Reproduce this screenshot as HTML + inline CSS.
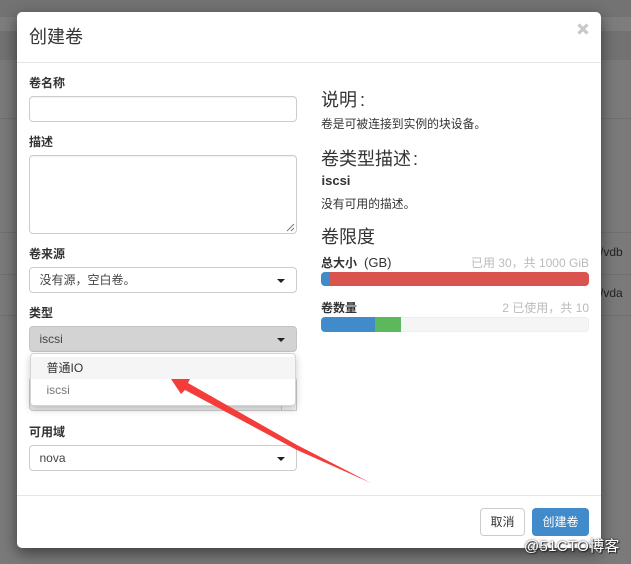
<!DOCTYPE html>
<html lang="zh"><head><meta charset="utf-8"><style>
html,body{margin:0;padding:0}
body{width:631px;height:564px;overflow:hidden;position:relative;background:#7a7a7a;font-family:"Liberation Sans","Noto Sans CJK SC",sans-serif;font-size:12px;color:#333}
.a{position:absolute;white-space:nowrap}
.band{position:absolute;left:0;width:631px}
.l{font-weight:700;line-height:16px;height:16px;left:12px;color:#333}
.f{box-sizing:border-box;border:1px solid #ccc;border-radius:4px;background:#fff;left:12px;width:268px;box-shadow:inset 0 1px 1px rgba(0,0,0,.05)}
.s{height:26px;line-height:24px;padding-left:9.5px;color:#444;box-shadow:none}
.c{position:absolute;right:11px;top:11px;width:0;height:0;border-left:4px solid transparent;border-right:4px solid transparent;border-top:4px solid #222}
.h{left:304px;font-size:18px;line-height:22px;color:#333}
.bar{left:304px;width:268px;border-radius:4px;overflow:hidden;background:#f5f5f5}
.bar div{position:absolute;top:0;bottom:0}
.m{color:#bbb;right:12px;line-height:16px}
</style></head><body>
<div class="band" style="top:0;height:17px;background:#737373"></div>
<div class="band" style="top:17px;height:14px;background:#7d7d7d"></div>
<div class="band" style="top:31px;height:29px;background:#727272"></div>
<div class="band" style="top:118px;height:1px;background:#707070"></div>
<div class="band" style="top:232px;height:1px;background:#707070"></div>
<div class="band" style="top:274px;height:1px;background:#707070"></div>
<div class="band" style="top:315px;height:1px;background:#707070"></div>
<div class="a" style="left:600px;top:244px;color:#222;line-height:16px">/vdb</div>
<div class="a" style="left:600px;top:285px;color:#222;line-height:16px">/vda</div>

<div class="a" style="left:17px;top:12px;width:584px;height:536px;background:#fff;border-radius:5px;box-shadow:0 5px 15px rgba(0,0,0,.5);white-space:normal">
 <div class="a" style="left:12px;top:12px;font-size:18px;line-height:26px;color:#333">创建卷</div>
 <svg class="a" style="left:559px;top:10px" width="14" height="14"><path d="M2.5 2.5L11.5 11.5M11.5 2.5L2.5 11.5" stroke="#c9c9c9" stroke-width="3.2" fill="none"/></svg>
 <div class="a" style="left:0;top:50px;width:584px;height:1px;background:#e5e5e5"></div>

 <div class="a l" style="top:63px">卷名称</div>
 <div class="a f" style="top:84px;height:26px"></div>
 <div class="a l" style="top:122px">描述</div>
 <div class="a f" style="top:143px;height:79px">
  <svg class="a" style="right:1px;bottom:1px" width="9" height="9"><path d="M1 8L8 1M5 8L8 5" stroke="#777" stroke-width="1" fill="none"/></svg>
 </div>
 <div class="a l" style="top:234px">卷来源</div>
 <div class="a f s" style="top:255px">没有源，空白卷。<i class="c"></i></div>
 <div class="a l" style="top:293px">类型</div>
 <div class="a f s" style="top:314px;background:#d3d3d3;border-color:#c4c4c4">iscsi<i class="c"></i></div>

 <div class="a f" style="top:365px;height:34px;background:#eee"></div>
 <div class="a" style="left:264px;top:375px;width:16px;height:24px;box-sizing:border-box;border:1px solid #ccc;background:#f5f5f5"></div>

 <div class="a" style="left:13px;top:341px;width:266px;height:53px;box-sizing:border-box;background:#fff;border:1px solid #d5d5d5;border-radius:4px;box-shadow:0 3px 8px rgba(0,0,0,.22)">
  <div class="a" style="left:0;top:3px;width:264px;height:22px;background:#f5f5f5"></div>
  <div class="a" style="left:15.5px;top:3px;line-height:22px;color:#333">普通IO</div>
  <div class="a" style="left:15.5px;top:25px;line-height:22px;color:#777">iscsi</div>
 </div>

 <div class="a l" style="top:412px">可用域</div>
 <div class="a f s" style="top:433px">nova<i class="c"></i></div>

 <div class="a h" style="top:77px;font-size:18px">说明<span style="margin-left:3px">:</span></div>
 <div class="a" style="left:304px;top:104px;line-height:16px;font-size:11.8px">卷是可被连接到实例的块设备。</div>
 <div class="a h" style="top:136px">卷类型描述<span style="margin-left:2px">:</span></div>
 <div class="a" style="left:304.5px;top:161px;line-height:16px;font-weight:700;font-size:13px">iscsi</div>
 <div class="a" style="left:304px;top:184px;line-height:16px;font-size:11.8px">没有可用的描述。</div>
 <div class="a h" style="top:214px">卷限度</div>

 <div class="a" style="left:304px;top:243px;line-height:16px;font-weight:700">总大小</div>
 <div class="a" style="left:347px;top:243px;line-height:16px;font-size:13px">(GB)</div>
 <div class="a m" style="top:243px">已用 30，共 1000 GiB</div>
 <div class="a bar" style="top:260px;height:14px">
  <div style="left:0;width:8px;background:#428bca"></div>
  <div style="left:8px;right:0;background:#d9534f"></div>
 </div>
 <div class="a" style="left:304px;top:288px;line-height:16px;font-weight:700">卷数量</div>
 <div class="a m" style="top:288px">2 已使用，共 10</div>
 <div class="a bar" style="top:305px;height:15px;box-shadow:inset 0 0 0 1px #eee">
  <div style="left:0;width:54px;background:#428bca"></div>
  <div style="left:54px;width:26px;background:#5cb85c"></div>
 </div>

 <div class="a" style="left:0;top:483px;width:584px;height:1px;background:#e5e5e5"></div>
 <div class="a" style="left:463px;top:496px;width:45px;height:28px;box-sizing:border-box;border:1px solid #ccc;border-radius:4px;text-align:center;line-height:26px;color:#333">取消</div>
 <div class="a" style="left:515px;top:496px;width:57px;height:28px;border-radius:4px;background:#428bca;text-align:center;line-height:28px;color:#fff">创建卷</div>
</div>

<svg class="a" style="left:0;top:0" width="631" height="564"><polygon points="171,379 190,379 188,383 297,445 371,483 297,450 185,390 181,394" fill="#f43c3a"/></svg>
<div class="a" style="left:524px;top:538px;font-size:15px;letter-spacing:.3px;line-height:18px;color:#fff;text-shadow:0 0 2px #222,1px 1px 1px #222">@51CTO博客</div>
</body></html>
